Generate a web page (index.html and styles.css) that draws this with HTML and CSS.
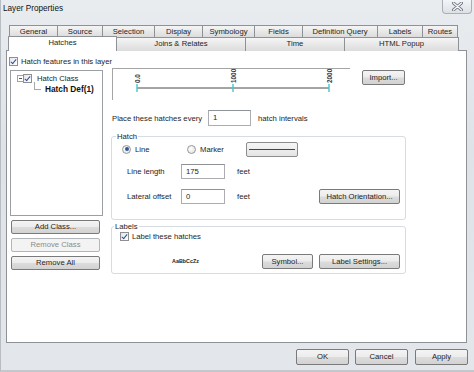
FILE: index.html
```html
<!DOCTYPE html>
<html lang="en">
<head>
    <meta charset="UTF-8">
    <meta name="viewport" content="width=device-width, initial-scale=1.0">
    <title>Layer Properties</title>
    <link rel="stylesheet" href="styles.css">
</head>
<body>
<div class="window">
    <div class="titlebar">
        <span class="title">Layer Properties</span>
        <span class="close-btn">
            <svg width="11" height="9" viewBox="0 0 11 9">
                <path d="M1.5 1 L9.5 8 M9.5 1 L1.5 8" stroke="#737b85" stroke-width="3" stroke-linecap="round"/>
                <path d="M1.5 1 L9.5 8 M9.5 1 L1.5 8" stroke="#fbfbfb" stroke-width="1.2" stroke-linecap="round"/>
            </svg>
        </span>
    </div>

    <div class="tabs">
        <div class="tab-row top-row">
            <div class="tab">General</div>
            <div class="tab">Source</div>
            <div class="tab">Selection</div>
            <div class="tab">Display</div>
            <div class="tab">Symbology</div>
            <div class="tab">Fields</div>
            <div class="tab">Definition Query</div>
            <div class="tab">Labels</div>
            <div class="tab">Routes</div>
        </div>
        <div class="tab-row bottom-row">
            <div class="tab active">Hatches</div>
            <div class="tab">Joins &amp; Relates</div>
            <div class="tab">Time</div>
            <div class="tab">HTML Popup</div>
        </div>
    </div>

    <div class="panel">
        <div class="check-line main-check">
            <span class="checkbox checked"></span>
            <span>Hatch features in this layer</span>
        </div>

        <div class="columns">
            <div class="side">
                <div class="tree">
                    <div class="tree-node">
                        <span class="expander"></span>
                        <span class="checkbox checked"></span>
                        <span>Hatch Class</span>
                    </div>
                    <div class="tree-child">
                        <span class="branch"></span>
                        <b>Hatch Def(1)</b>
                    </div>
                </div>
                <div class="btn side-btn">Add Class...</div>
                <div class="btn side-btn disabled">Remove Class</div>
                <div class="btn side-btn">Remove All</div>
            </div>

            <div class="main">
                <div class="ruler-row">
                    <div class="ruler">
                        <svg width="238" height="31" viewBox="0 0 238 31">
                            <line x1="24" y1="19" x2="216" y2="19" stroke="#4a4a4a" stroke-width="1"/>
                            <g stroke="#3fc9cf" stroke-width="1.4">
                                <line x1="24" y1="15" x2="24" y2="23"/>
                                <line x1="120" y1="15" x2="120" y2="23"/>
                                <line x1="216" y1="15" x2="216" y2="23"/>
                            </g>
                            <g font-family="Liberation Sans, sans-serif" font-size="6.4" font-weight="bold" fill="#333">
                                <text transform="translate(26.5,14) rotate(-90)">0.0</text>
                                <text transform="translate(122.5,14) rotate(-90)">1000</text>
                                <text transform="translate(218.5,14) rotate(-90)">2000</text>
                            </g>
                        </svg>
                    </div>
                    <div class="btn import-btn">Import...</div>
                </div>

                <div class="every-row">
                    <span class="every-label">Place these hatches every</span>
                    <span class="field every-field">1</span>
                    <span class="after">hatch intervals</span>
                </div>

                <fieldset class="group hatch-group">
                    <legend>Hatch</legend>
                    <div class="group-row type-row">
                        <span class="radio-label line-opt"><span class="radio on"></span>Line</span>
                        <span class="radio-label marker-opt"><span class="radio"></span>Marker</span>
                        <span class="line-sample"><span class="sample-stroke"></span></span>
                    </div>
                    <div class="group-row value-row length-row">
                        <span class="value-label">Line length</span>
                        <span class="field">175</span>
                        <span class="unit">feet</span>
                    </div>
                    <div class="group-row value-row offset-row">
                        <span class="value-label">Lateral offset</span>
                        <span class="field">0</span>
                        <span class="unit">feet</span>
                        <span class="btn wide-btn push">Hatch Orientation...</span>
                    </div>
                </fieldset>

                <fieldset class="group labels-group">
                    <legend>Labels</legend>
                    <div class="check-line label-check">
                        <span class="checkbox checked"></span>
                        <span>Label these hatches</span>
                    </div>
                    <div class="group-row label-row">
                        <span class="label-sample">AaBbCcZz</span>
                        <span class="btn symbol-btn push">Symbol...</span>
                        <span class="btn wide-btn">Label Settings...</span>
                    </div>
                </fieldset>
            </div>
        </div>
    </div>

    <div class="footer">
        <div class="btn footer-btn">OK</div>
        <div class="btn footer-btn cancel">Cancel</div>
        <div class="btn footer-btn apply">Apply</div>
    </div>
</div>
</body>
</html>
```

FILE: styles.css
```css
body {
    margin: 0;
    padding: 0;
    font-family: 'Liberation Sans', Arial, sans-serif;
    font-size: 7.7px;
    color: #1e1e1e;
    overflow: hidden;
}

.window {
    width: 474px;
    height: 372px;
    box-sizing: border-box;
    background: linear-gradient(180deg, #e9ecef 0%, #dfe3e8 40%, #e3e6ea 100%);
    border-left: 1px solid #b8bdc3;
    border-bottom: 2px solid #c4c8cc;
}

/* title bar */
.titlebar {
    height: 25px;
    display: flex;
    align-items: flex-start;
}

.title {
    padding: 4px 0 0 2px;
    font-size: 8.2px;
    color: #111;
}

.close-btn {
    margin-left: auto;
    margin-right: 2px;
    width: 30px;
    height: 14px;
    box-sizing: border-box;
    border: 1px solid #a9b0b8;
    border-top: none;
    border-radius: 0 0 4px 4px;
    background: linear-gradient(180deg, #f3f5f7, #dde1e6);
    display: flex;
    justify-content: center;
    align-items: center;
}

/* tabs */
.tabs {
    margin-left: 7px;
}

.tab-row {
    display: grid;
}

.top-row {
    margin-left: 1px;
    height: 12px;
    grid-template-columns: 48px 45px 52px 48px 52px 48px 75px 45px 35px;
}

.bottom-row {
    height: 13px;
    grid-template-columns: 108px 129px 99px 114px;
}

.tab {
    box-sizing: border-box;
    border: 1px solid #8e9196;
    border-bottom: none;
    margin-right: -1px;
    text-align: center;
    line-height: 11px;
    background: linear-gradient(180deg, #f5f5f5 0%, #e8e8e8 50%, #dcdcdc 100%);
    white-space: nowrap;
}

.bottom-row .tab {
    line-height: 12px;
}

.tab.active {
    position: relative;
    z-index: 1;
    margin-top: -1px;
    height: 15px;
    background: #fff;
    line-height: 12px;
}

/* content panel */
.panel {
    margin-left: 5px;
    width: 461px;
    height: 293px;
    box-sizing: border-box;
    border: 1px solid #8e9196;
    background: #fff;
    padding: 5px 3px 0 3px;
}

.check-line {
    display: flex;
    align-items: center;
    height: 11px;
}

.main-check {
    margin-left: -1px;
}

.checkbox {
    position: relative;
    width: 9px;
    height: 9px;
    box-sizing: border-box;
    border: 1px solid #8f8f8f;
    background: linear-gradient(135deg, #e6e6e6, #ffffff);
    margin-right: 3px;
    flex-shrink: 0;
}

.checkbox.checked::after {
    content: '';
    position: absolute;
    left: 2px;
    top: 0px;
    width: 2px;
    height: 5px;
    border-right: 1.5px solid #2c4f9e;
    border-bottom: 1.5px solid #2c4f9e;
    transform: rotate(40deg);
}

.columns {
    display: flex;
    gap: 8px;
    margin-top: 1px;
}

/* left side: class tree and buttons */
.side {
    width: 93px;
    padding-top: 2px;
}

.tree {
    height: 146px;
    box-sizing: border-box;
    border: 1px solid #9a9ea5;
    padding: 2px 0 0 6px;
}

.tree-node {
    display: flex;
    align-items: center;
    height: 10px;
}

.tree-node .checkbox {
    margin-left: -1px;
    margin-right: 5px;
}

.expander {
    position: relative;
    width: 7px;
    height: 7px;
    box-sizing: border-box;
    border: 1px solid #9ca3aa;
    margin-right: 0;
}

.expander::after {
    content: '';
    position: absolute;
    left: 1px;
    top: 2px;
    width: 3px;
    height: 1px;
    background: #555;
}

.tree-child {
    display: flex;
    align-items: flex-end;
    height: 11px;
    margin-left: 17px;
    font-size: 8.3px;
}

.tree-child b {
    line-height: 10px;
    color: #111;
}

.branch {
    width: 6px;
    height: 7px;
    border-left: 1px solid #a8a8a8;
    border-bottom: 1px solid #a8a8a8;
    margin: 0 4px 4px 0;
}

.btn {
    box-sizing: border-box;
    border: 1px solid #7a7a7a;
    border-radius: 2px;
    background: linear-gradient(180deg, #f4f4f4 0%, #ececec 48%, #dcdcdc 52%, #d2d2d2 100%);
    text-align: center;
    white-space: nowrap;
    color: #1e1e1e;
}

.btn.disabled {
    border-color: #b2b6ba;
    background: #f3f3f3;
    color: #8c8c8c;
}

.side-btn {
    width: 89px;
    height: 14px;
    line-height: 12px;
    margin: 4px 0 0 1px;
}

/* right side */
.main {
    width: 295px;
}

.ruler-row {
    display: flex;
    align-items: flex-start;
}

.ruler {
    margin-left: 1px;
    width: 238px;
    height: 32px;
    box-sizing: border-box;
    border-top: 1px solid #a5a5a5;
    border-left: 1px solid #a5a5a5;
}

.ruler svg {
    display: block;
}

.import-btn {
    margin: 2px 0 0 12px;
    width: 43px;
    height: 15px;
    line-height: 13px;
}

.every-row {
    display: flex;
    align-items: center;
    height: 16px;
    margin-top: 10px;
}

.every-label {
    width: 96px;
    margin-left: 1px;
}

.field {
    width: 44px;
    height: 15px;
    box-sizing: border-box;
    border: 1px solid #abadb3;
    border-top-color: #8f9296;
    padding-left: 4px;
    line-height: 13px;
    display: inline-block;
}

.every-field {
    height: 16px;
    width: 43px;
}

.after {
    margin-left: 7px;
}

.group {
    margin: 6px 0 0 0;
    padding: 0 5px 0 10px;
    border: 1px solid #d5dce3;
    border-radius: 3px;
    min-width: 0;
}

.group legend {
    padding: 0 1px;
    margin-left: -6px;
    line-height: 9px;
}

.group-row {
    display: flex;
    align-items: center;
}

.type-row {
    height: 16px;
}

.radio-label {
    display: flex;
    align-items: center;
}

.line-opt {
    width: 65px;
}

.marker-opt {
    width: 59px;
}

.radio {
    position: relative;
    width: 9px;
    height: 9px;
    box-sizing: border-box;
    border: 1px solid #989898;
    border-radius: 50%;
    background: radial-gradient(circle at 40% 40%, #ffffff, #dcdcdc);
    margin-right: 4px;
}

.radio.on::after {
    content: '';
    position: absolute;
    left: 1.5px;
    top: 1.5px;
    width: 4px;
    height: 4px;
    border-radius: 50%;
    background: #2f5a9e;
}

.line-sample {
    width: 52px;
    height: 15px;
    box-sizing: border-box;
    border: 1px solid #8d8d8d;
    border-radius: 2px;
    background: linear-gradient(180deg, #f6f6f6, #e4e4e4);
    display: flex;
    align-items: center;
    padding: 0 2px;
}

.sample-stroke {
    flex: 1;
    height: 1px;
    background: #444;
}

.value-row {
    height: 16px;
}

.length-row {
    margin-top: 6px;
}

.offset-row {
    margin-top: 9px;
    margin-bottom: 15px;
}

.value-label {
    width: 54px;
    margin-left: 5px;
}

.unit {
    margin-left: 12px;
}

.push {
    margin-left: auto;
}

.wide-btn {
    width: 81px;
    height: 15px;
    line-height: 13px;
}

.labels-group {
    margin-top: 2px;
    padding-left: 8px;
}

.label-row {
    height: 16px;
    margin-top: 11px;
    margin-bottom: 4px;
}

.label-sample {
    margin-left: 52px;
    font-size: 5.4px;
    font-weight: bold;
}

.symbol-btn {
    width: 51px;
    height: 15px;
    line-height: 13px;
    margin-right: 6px;
}

/* dialog buttons */
.footer {
    display: flex;
    justify-content: flex-end;
    margin-top: 6px;
    padding-right: 6px;
}

.footer-btn {
    width: 53px;
    height: 16px;
    line-height: 14px;
    margin-left: 6px;
}

.footer-btn.apply {
    margin-left: 7px;
}
```
